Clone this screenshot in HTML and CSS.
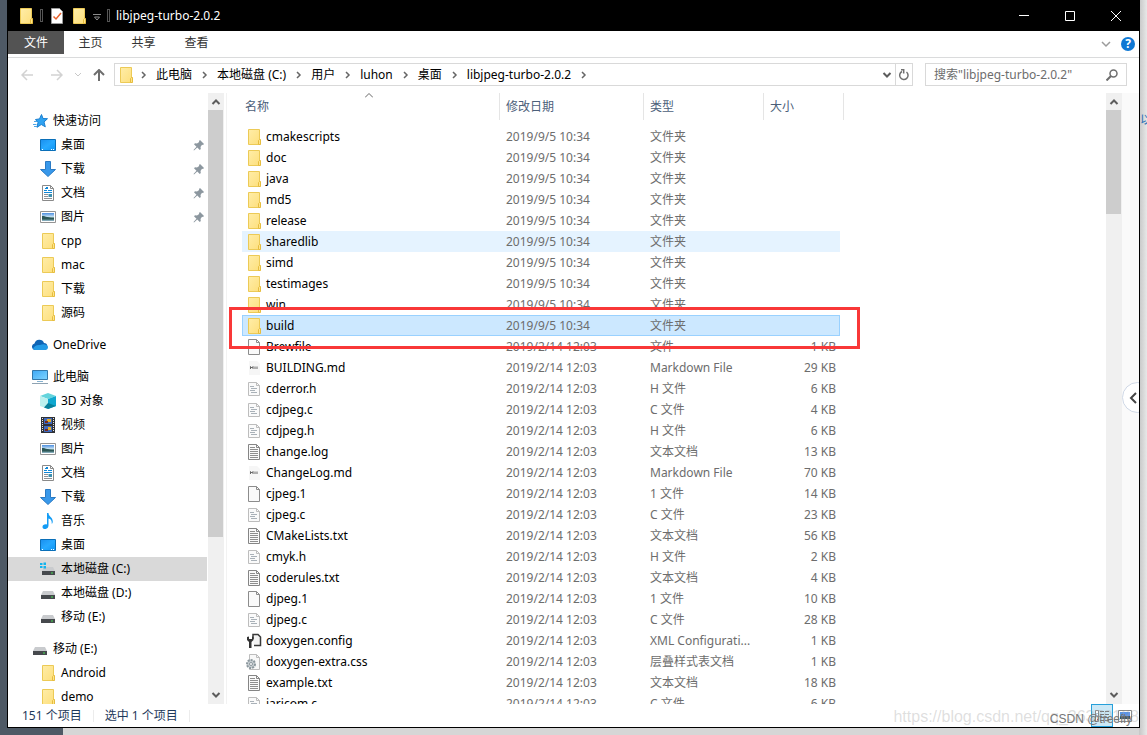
FILE: index.html
```html
<!DOCTYPE html>
<html lang="zh-CN">
<head>
    <meta charset="UTF-8">
    <meta name="viewport" content="width=device-width, initial-scale=1.0">
    <title>libjpeg-turbo-2.0.2</title>
    <link rel="stylesheet" href="styles.css">
</head>
<body>

<!-- Icon sprite -->
<svg class="sprite" aria-hidden="true">
    <linearGradient id="yellow" x2="1" y2="1"><stop stop-color="#ffeda8"/><stop offset="1" stop-color="#fddf7c"/></linearGradient>
    <linearGradient id="blue" x2="1" y2="1"><stop stop-color="#1a8fee"/><stop offset=".5" stop-color="#27a9ff"/><stop offset="1" stop-color="#0f96f5"/></linearGradient>
    <linearGradient id="screen" x2="1" y2="1"><stop stop-color="#3fa9f5"/><stop offset="1" stop-color="#7fd4ff"/></linearGradient>
    <linearGradient id="sky" x2="0" y2="1"><stop stop-color="#4b8ee0"/><stop offset=".5" stop-color="#cfe8f5"/><stop offset=".6" stop-color="#3c6a5e"/><stop offset="1" stop-color="#8fb5c9"/></linearGradient>
    <symbol id="folder" viewBox="0 0 16 16"><path d="M2.500.5h11v10h.5v5H2.500z" fill="url(#yellow)" stroke="#ecca56"/><path d="M12.500 15.500v-4l1-1h1v5z" fill="#ffe48a" stroke="#e6bd3f"/></symbol>
    <symbol id="star" viewBox="0 0 16 16"><path d="M9.500 1.500l1.500 4 4.500.2-3.500 3.300 1.300 4.800-4-2.300-4.300 2.800 1-4.800-2.500-3 4-.6z" fill="#2fa3f2" stroke="#1b7fd0"/><path d="M2 8.500h3M1 11.500h3.500M2 13.500h3" stroke="#4fa6e6"/></symbol>
    <symbol id="desktop" viewBox="0 0 16 16"><path d="M.5 2.500h15v11H.5z" fill="url(#blue)" stroke="#0a6fb8"/><path d="M2 12.500h1m8 0h1m1 0h1" stroke="#fff"/></symbol>
    <symbol id="download" viewBox="0 0 16 16"><path d="M5.500.5h5v8h5L8 15.500.5 8.500h5z" fill="#3898ea" stroke="#2a7ac4"/></symbol>
    <symbol id="document" viewBox="0 0 16 16"><path d="M2.500.5h8l3 3v12h-11z" fill="#fff" stroke="#8a8a8a"/><path d="M10.500.5v3h3" fill="none" stroke="#8a8a8a"/><path d="M6 2.500h2M5 3.500h3M4 5.500h3m1 0h4M4 7.500h8" stroke="#0d87d9"/><path d="M4 9.500h4m-4 2h4m-4 2h8" stroke="#8d9298"/><path d="M8.500 9h3.500v3H8.500z" fill="#3f8fae"/></symbol>
    <symbol id="picture" viewBox="0 0 16 16"><path d="M.5 2.500h15v11H.5z" fill="#fff" stroke="#949494"/><path d="M2 4h12v8H2z" fill="url(#sky)"/><path d="M2 7c4 0 6 2 12 2v1.500H2z" fill="#2c5757"/></symbol>
    <symbol id="cloud" viewBox="0 0 16 16"><path d="M3 13a3.300 3.300 0 0 1-.5-6.500 5 5 0 0 1 9.500-.5 3.600 3.600 0 0 1 1 7z" fill="#0f64b5"/><path d="M1 12c1-3 4-4.500 7-4 3-1.500 7-1 8 2 0 2-1 3-3 3H3z" fill="#249be6"/></symbol>
    <symbol id="computer" viewBox="0 0 16 16"><path d="M.5 1.500h15v9H.5z" fill="url(#screen)" stroke="#3478aa"/><path d="M5 12.500h6" stroke="#86b2cf"/><path d="M0 14.500h16" stroke="#8fa3b3"/></symbol>
    <symbol id="cube" viewBox="0 0 16 16"><path d="M8 0l8 3-8 3-8-3z" fill="#63d4dc"/><path d="M0 3l8 3v10l-8-3z" fill="#bcf0ee"/><path d="M16 3L8 6v10l8-3z" fill="#0fa7cf"/><path d="M8 10l8 3-8 3-4-1.500z" fill="#08809a"/></symbol>
    <symbol id="video" viewBox="0 0 16 16"><path d="M1 0h14v16H1z" fill="#303236"/><path d="M2.500 1v14m11-14v14" stroke="#e6e6e6" stroke-dasharray="1 1"/><path d="M4 1h8v6H4zm0 8h8v6H4z" fill="#3f69bd"/><path d="M7 2h4v3H7zm1 8h3v3H8z" fill="#e5ae28"/><path d="M5 4h3v2H5zm0 8h3v2H5z" fill="#742b1d"/></symbol>
    <symbol id="music" viewBox="0 0 16 16"><path d="M7 0h1.500c0 4 5.500 4.500 4 10-.4.800-.8 1-.8.500.3-3-1-4.500-3.200-5v7c-.3 4.500-6 4.500-6 1.500 0-2 2-3 4.500-2.500z" fill="#139cf5"/></symbol>
    <symbol id="disk" viewBox="0 0 16 16"><path d="M3 6h10l2 4H1z" fill="#c9cbce"/><path d="M1 10h14v4H1z" fill="#46494d"/><path d="M11 12h2" stroke="#45e052"/></symbol>
    <symbol id="sysdisk" viewBox="0 0 16 16"><path d="M4 6h9l2 4H2z" fill="#c9cbce"/><path d="M2 10h13v4H2z" fill="#46494d"/><path d="M11 12h2" stroke="#45e052"/><path d="M0 2h2.500v2H0zm3.500-.5H6V4H3.500zM0 5h2.500v2H0zm3.500 0H6v2.500H3.500z" fill="#12b4ee"/></symbol>
    <symbol id="pin" viewBox="0 0 12 12"><path d="M7 1l4 4-1 1-1-.2L7.500 8l.3 2-1 1-2.500-2.500L1 11.500 .5 11l3-3.300L1 5.200l1-1 2 .3L6.200 3 6 2z" fill="#8c979f"/></symbol>
    <symbol id="blank" viewBox="0 0 16 16"><path d="M2.500.5h8l3 3v12h-11z" fill="#fafafa" stroke="#8c8c8c"/><path d="M10.500.5v3h3" fill="none" stroke="#8c8c8c"/></symbol>
    <symbol id="text" viewBox="0 0 16 16"><path d="M2.500.5h8l3 3v12h-11z" fill="#fafafa" stroke="#858585"/><path d="M10.500.5v3h3" fill="none" stroke="#858585"/><path d="M4 3.500h5m-5 2h8m-8 2h8m-8 2h8m-8 2h8m-8 2h8" stroke="#8e8e8e"/></symbol>
    <symbol id="code" viewBox="0 0 16 16"><path d="M2.500 1.500h8l3 3v10h-11z" fill="#fafafa" stroke="#bdbdbd"/><path d="M10.500 1.500v3h3" fill="none" stroke="#bdbdbd"/><path d="M4 5.500h4m-3 2h6m-7 2h5m-4 2h6" stroke="#a9b1b8"/></symbol>
    <symbol id="markdown" viewBox="0 0 16 16"><path d="M3 1h8l3 3v11H3z" fill="#f6f6f6"/><path d="M4.500 9V6.500L6 8l1-1.500V9m2-2.500V9m2-2.500V9" fill="none" stroke="#666"/></symbol>
    <symbol id="config" viewBox="0 0 16 16"><path d="M7 6V1.500h5l2.500 2.500v8.500H8" fill="#f3f3f3" stroke="#3a3a3a" stroke-width="1.500"/><path d="M1 4v3l2 2v6h2.500V9l2-2V4L6 3.500V6H3V3.500z" fill="#333"/></symbol>
    <symbol id="css" viewBox="0 0 16 16"><path d="M3.500.5h7l3 3v12h-10z" fill="#f8f8f8" stroke="#bdbdbd"/><path d="M10.500.5v3h3" fill="none" stroke="#bdbdbd"/><circle cx="5" cy="10" r="4" fill="#c8cfd3" stroke="#8b979d" stroke-width="2" stroke-dasharray="2 1"/><circle cx="5" cy="10" r="1.500" fill="#fff" stroke="#8b979d"/></symbol>
    <symbol id="check" viewBox="0 0 16 16"><path d="M2.500.5h8l3 3v12h-11z" fill="#fff" stroke="#9a9a9a"/><path d="M4.500 8.500l2.500 2.500 5-6" fill="none" stroke="#e8622c" stroke-width="1.500"/></symbol>
    <symbol id="chevron-right" viewBox="0 0 8 8"><path d="M2.500 1l3 3-3 3" fill="none" stroke="currentColor" stroke-width="1.500"/></symbol>
    <symbol id="chevron-up" viewBox="0 0 10 10"><path d="M1.500 7L5 3.500 8.500 7" fill="none" stroke="currentColor" stroke-width="2"/></symbol>
    <symbol id="chevron-down" viewBox="0 0 10 10"><path d="M1.500 3L5 6.500 8.500 3" fill="none" stroke="currentColor" stroke-width="2"/></symbol>
</svg>

<div class="window">
    <header class="title-bar">
        <svg class="icon"><use href="#folder"/></svg>
        <span class="grip"></span>
        <button class="quick" aria-label="属性"><svg class="icon"><use href="#check"/></svg></button>
        <button class="quick" aria-label="新建文件夹"><svg class="icon"><use href="#folder"/></svg></button>
        <button class="quick" aria-label="自定义快速访问工具栏"><svg width="8" height="10" viewBox="0 0 8 10"><path d="M0 3.500h8M1.500 6h5L4 9z" fill="none" stroke="#8b8b8b"/></svg></button>
        <span class="grip"></span>
        <h1>libjpeg-turbo-2.0.2</h1>
        <div class="window-buttons">
            <button aria-label="最小化"><svg width="10" height="10"><path d="M0 4.500h10" stroke="#fff"/></svg></button>
            <button aria-label="最大化"><svg width="10" height="10"><path d="M.5.500h9v9h-9z" fill="none" stroke="#fff"/></svg></button>
            <button aria-label="关闭"><svg width="10" height="10"><path d="M0 0l10 10M10 0L0 10" stroke="#fff"/></svg></button>
        </div>
    </header>

    <div class="ribbon">
        <button class="tab file-tab">文件</button>
        <button class="tab">主页</button>
        <button class="tab">共享</button>
        <button class="tab">查看</button>
        <div class="ribbon-right">
            <button aria-label="展开功能区"><svg width="10" height="10" viewBox="0 0 10 10"><path d="M1 3l4 4 4-4" fill="none" stroke="#9b9b9b" stroke-width="1.500"/></svg></button>
            <button class="help" aria-label="帮助">?</button>
        </div>
    </div>

    <div class="address-row">
        <div class="arrows">
            <button aria-label="后退"><svg width="12" height="12"><path d="M12 6H1M6 1L1 6l5 5" fill="none" stroke="#d2d2d2" stroke-width="1.500"/></svg></button>
            <button aria-label="前进"><svg width="12" height="12"><path d="M0 6h11M6 1l5 5-5 5" fill="none" stroke="#d2d2d2" stroke-width="1.500"/></svg></button>
            <button aria-label="最近浏览的位置"><svg width="6" height="6"><path d="M0 1l3 3 3-3" fill="none" stroke="#c8c8c8"/></svg></button>
            <button aria-label="上移"><svg width="12" height="12"><path d="M6 12V2M1 6l5-5 5 5" fill="none" stroke="#6e6e6e" stroke-width="2"/></svg></button>
        </div>
        <nav class="address">
            <svg class="icon"><use href="#folder"/></svg>
            <svg class="sep"><use href="#chevron-right"/></svg>
            <a href="#">此电脑</a>
            <svg class="sep"><use href="#chevron-right"/></svg>
            <a href="#">本地磁盘 (C:)</a>
            <svg class="sep"><use href="#chevron-right"/></svg>
            <a href="#">用户</a>
            <svg class="sep"><use href="#chevron-right"/></svg>
            <a href="#">luhon</a>
            <svg class="sep"><use href="#chevron-right"/></svg>
            <a href="#">桌面</a>
            <svg class="sep"><use href="#chevron-right"/></svg>
            <a href="#">libjpeg-turbo-2.0.2</a>
            <svg class="sep"><use href="#chevron-right"/></svg>
            <button class="history" aria-label="以前的位置"><svg class="arrow"><use href="#chevron-down"/></svg></button>
            <button class="refresh" aria-label="刷新"><svg width="12" height="12" viewBox="0 0 12 12"><path d="M8.500 3A4.200 4.200 0 1 1 4 2.500M3 .8h2.700v3.700" fill="none" stroke="#707070" stroke-width="1.500"/></svg></button>
        </nav>
        <div class="search">
            <input type="text" aria-label="搜索" placeholder='搜索"libjpeg-turbo-2.0.2"'>
            <svg width="12" height="12" viewBox="0 0 12 12"><circle cx="7.500" cy="4.500" r="3.500" fill="none" stroke="#6e6e6e" stroke-width="1.500"/><path d="M5 7l-4.500 4.500" stroke="#6e6e6e" stroke-width="2"/></svg>
        </div>
    </div>

    <main class="content">
        <nav class="tree">
            <ul>
                <li><svg class="icon"><use href="#star"/></svg>快速访问</li>
                <li class="sub"><svg class="icon"><use href="#desktop"/></svg>桌面<svg class="pin"><use href="#pin"/></svg></li>
                <li class="sub"><svg class="icon"><use href="#download"/></svg>下载<svg class="pin"><use href="#pin"/></svg></li>
                <li class="sub"><svg class="icon"><use href="#document"/></svg>文档<svg class="pin"><use href="#pin"/></svg></li>
                <li class="sub"><svg class="icon"><use href="#picture"/></svg>图片<svg class="pin"><use href="#pin"/></svg></li>
                <li class="sub"><svg class="icon"><use href="#folder"/></svg>cpp</li>
                <li class="sub"><svg class="icon"><use href="#folder"/></svg>mac</li>
                <li class="sub"><svg class="icon"><use href="#folder"/></svg>下载</li>
                <li class="sub"><svg class="icon"><use href="#folder"/></svg>源码</li>
            </ul>
            <ul>
                <li><svg class="icon"><use href="#cloud"/></svg>OneDrive</li>
            </ul>
            <ul>
                <li><svg class="icon"><use href="#computer"/></svg>此电脑</li>
                <li class="sub"><svg class="icon"><use href="#cube"/></svg>3D 对象</li>
                <li class="sub"><svg class="icon"><use href="#video"/></svg>视频</li>
                <li class="sub"><svg class="icon"><use href="#picture"/></svg>图片</li>
                <li class="sub"><svg class="icon"><use href="#document"/></svg>文档</li>
                <li class="sub"><svg class="icon"><use href="#download"/></svg>下载</li>
                <li class="sub"><svg class="icon"><use href="#music"/></svg>音乐</li>
                <li class="sub"><svg class="icon"><use href="#desktop"/></svg>桌面</li>
                <li class="sub current"><svg class="icon"><use href="#sysdisk"/></svg>本地磁盘 (C:)</li>
                <li class="sub"><svg class="icon"><use href="#disk"/></svg>本地磁盘 (D:)</li>
                <li class="sub"><svg class="icon"><use href="#disk"/></svg>移动 (E:)</li>
            </ul>
            <ul>
                <li><svg class="icon"><use href="#disk"/></svg>移动 (E:)</li>
                <li class="sub"><svg class="icon"><use href="#folder"/></svg>Android</li>
                <li class="sub"><svg class="icon"><use href="#folder"/></svg>demo</li>
            </ul>
        </nav>
        <div class="scrollbar">
            <svg class="arrow"><use href="#chevron-up"/></svg>
            <div class="track"><div class="thumb tree-thumb"></div></div>
            <svg class="arrow"><use href="#chevron-down"/></svg>
        </div>

        <section class="files">
            <table>
                <thead>
                    <tr>
                        <th class="name">名称<svg class="sort" viewBox="0 0 8 5"><path d="M0 4.500l4-4 4 4" fill="none" stroke="#666"/></svg></th>
                        <th class="date">修改日期</th>
                        <th class="type">类型</th>
                        <th class="size">大小</th>
                    </tr>
                </thead>
                <tbody>
                    <tr><td><svg class="icon"><use href="#folder"/></svg>cmakescripts</td><td>2019/9/5 10:34</td><td>文件夹</td><td></td></tr>
                    <tr><td><svg class="icon"><use href="#folder"/></svg>doc</td><td>2019/9/5 10:34</td><td>文件夹</td><td></td></tr>
                    <tr><td><svg class="icon"><use href="#folder"/></svg>java</td><td>2019/9/5 10:34</td><td>文件夹</td><td></td></tr>
                    <tr><td><svg class="icon"><use href="#folder"/></svg>md5</td><td>2019/9/5 10:34</td><td>文件夹</td><td></td></tr>
                    <tr><td><svg class="icon"><use href="#folder"/></svg>release</td><td>2019/9/5 10:34</td><td>文件夹</td><td></td></tr>
                    <tr class="hovered"><td><svg class="icon"><use href="#folder"/></svg>sharedlib</td><td>2019/9/5 10:34</td><td>文件夹</td><td></td></tr>
                    <tr><td><svg class="icon"><use href="#folder"/></svg>simd</td><td>2019/9/5 10:34</td><td>文件夹</td><td></td></tr>
                    <tr><td><svg class="icon"><use href="#folder"/></svg>testimages</td><td>2019/9/5 10:34</td><td>文件夹</td><td></td></tr>
                    <tr><td><svg class="icon"><use href="#folder"/></svg>win</td><td>2019/9/5 10:34</td><td>文件夹</td><td></td></tr>
                    <tr class="selected"><td><svg class="icon"><use href="#folder"/></svg>build<span class="marker"></span></td><td>2019/9/5 10:34</td><td>文件夹</td><td></td></tr>
                    <tr><td><svg class="icon"><use href="#blank"/></svg>Brewfile</td><td>2019/2/14 12:03</td><td>文件</td><td>1 KB</td></tr>
                    <tr><td><svg class="icon"><use href="#markdown"/></svg>BUILDING.md</td><td>2019/2/14 12:03</td><td>Markdown File</td><td>29 KB</td></tr>
                    <tr><td><svg class="icon"><use href="#code"/></svg>cderror.h</td><td>2019/2/14 12:03</td><td>H 文件</td><td>6 KB</td></tr>
                    <tr><td><svg class="icon"><use href="#code"/></svg>cdjpeg.c</td><td>2019/2/14 12:03</td><td>C 文件</td><td>4 KB</td></tr>
                    <tr><td><svg class="icon"><use href="#code"/></svg>cdjpeg.h</td><td>2019/2/14 12:03</td><td>H 文件</td><td>6 KB</td></tr>
                    <tr><td><svg class="icon"><use href="#text"/></svg>change.log</td><td>2019/2/14 12:03</td><td>文本文档</td><td>13 KB</td></tr>
                    <tr><td><svg class="icon"><use href="#markdown"/></svg>ChangeLog.md</td><td>2019/2/14 12:03</td><td>Markdown File</td><td>70 KB</td></tr>
                    <tr><td><svg class="icon"><use href="#blank"/></svg>cjpeg.1</td><td>2019/2/14 12:03</td><td>1 文件</td><td>14 KB</td></tr>
                    <tr><td><svg class="icon"><use href="#code"/></svg>cjpeg.c</td><td>2019/2/14 12:03</td><td>C 文件</td><td>23 KB</td></tr>
                    <tr><td><svg class="icon"><use href="#text"/></svg>CMakeLists.txt</td><td>2019/2/14 12:03</td><td>文本文档</td><td>56 KB</td></tr>
                    <tr><td><svg class="icon"><use href="#code"/></svg>cmyk.h</td><td>2019/2/14 12:03</td><td>H 文件</td><td>2 KB</td></tr>
                    <tr><td><svg class="icon"><use href="#text"/></svg>coderules.txt</td><td>2019/2/14 12:03</td><td>文本文档</td><td>4 KB</td></tr>
                    <tr><td><svg class="icon"><use href="#blank"/></svg>djpeg.1</td><td>2019/2/14 12:03</td><td>1 文件</td><td>10 KB</td></tr>
                    <tr><td><svg class="icon"><use href="#code"/></svg>djpeg.c</td><td>2019/2/14 12:03</td><td>C 文件</td><td>28 KB</td></tr>
                    <tr><td><svg class="icon"><use href="#config"/></svg>doxygen.config</td><td>2019/2/14 12:03</td><td>XML Configurati...</td><td>1 KB</td></tr>
                    <tr><td><svg class="icon"><use href="#css"/></svg>doxygen-extra.css</td><td>2019/2/14 12:03</td><td>层叠样式表文档</td><td>1 KB</td></tr>
                    <tr><td><svg class="icon"><use href="#text"/></svg>example.txt</td><td>2019/2/14 12:03</td><td>文本文档</td><td>18 KB</td></tr>
                    <tr><td><svg class="icon"><use href="#code"/></svg>jaricom.c</td><td>2019/2/14 12:03</td><td>C 文件</td><td>6 KB</td></tr>
                </tbody>
            </table>
        </section>
        <div class="scrollbar">
            <svg class="arrow"><use href="#chevron-up"/></svg>
            <div class="track"><div class="thumb files-thumb"></div></div>
            <svg class="arrow"><use href="#chevron-down"/></svg>
        </div>
        <div class="side-edge">
            <button class="side-handle" aria-label="展开侧栏"><svg width="8" height="12"><path d="M7 1L2 6l5 5" fill="none" stroke="#444" stroke-width="2"/></svg></button>
        </div>
    </main>

    <footer class="status-bar">
        <span class="status">151 个项目</span>
        <span class="status">选中 1 个项目</span>
        <div class="views">
            <button class="view active" aria-label="详细信息"><svg width="16" height="14"><path d="M1.500 1.500h3v11h-3z" fill="#fff" stroke="#8b8b8b"/><path d="M2.500 4.500h1m-1 3h1" stroke="#58a"/><path d="M3 10.500h1" stroke="#c33"/><path d="M6 2.500h4m1 0h4m-9 3h4m1 0h4m-9 3h4m1 0h4m-9 3h4m1 0h4" stroke="#777"/></svg></button>
            <button class="view" aria-label="大图标"><svg width="14" height="12"><path d="M.5.500h13v11H.5z" fill="#fff" stroke="#858585"/><path d="M2 2h10v5H2z" fill="#5a94e8"/><path d="M2 6h10v3H2z" fill="#334f60"/></svg></button>
        </div>
    </footer>
</div>

<div class="behind">以</div>
<div class="watermark blog">https://blog.csdn.net/qq_36370188</div>
<div class="watermark author">CSDN @treefly</div>

</body>
</html>
```
FILE: styles.css
```css
* {
    box-sizing: border-box;
}

body {
    margin: 0;
    padding: 0 7px 7px;
    height: 100vh;
    overflow: hidden;
    position: relative;
    font-family: "Noto Sans", "Noto Sans CJK SC", sans-serif;
    font-size: 12px;
    line-height: 20px;
    color: #000;
    background: linear-gradient(to right, #4e5965 63px, #d6d6d6 63px, #d6d6d6 calc(100% - 8px), #c6c6c6 calc(100% - 8px), #e8e8e8 100%);
}

button {
    display: flex;
    align-items: center;
    justify-content: center;
    padding: 0;
    border: none;
    background: none;
    font: inherit;
    color: inherit;
}

svg {
    display: block;
    flex: none;
}

a {
    color: inherit;
    text-decoration: none;
}

.sprite {
    position: absolute;
    width: 0;
    height: 0;
}

.icon {
    width: 16px;
    height: 16px;
}

.arrow {
    width: 10px;
    height: 10px;
    color: #5c5c5c;
}

.window {
    display: flex;
    flex-direction: column;
    height: 100%;
    border: 1px solid #000;
    border-top: none;
    background: #fff;
}

/* Title bar */
.title-bar {
    display: flex;
    align-items: center;
    gap: 6px;
    height: 31px;
    padding-left: 10px;
    background: #000;
    color: #fff;
}

.title-bar h1 {
    margin: 0;
    font-size: 12px;
    font-weight: normal;
}

.grip {
    width: 3px;
    height: 13px;
    border: 1px solid #555;
}

.window-buttons {
    display: flex;
    margin-left: auto;
}

.window-buttons button {
    width: 46px;
    height: 31px;
}

/* Ribbon */
.ribbon {
    display: flex;
    height: 27px;
    border-bottom: 1px solid #dadbdc;
    color: #333;
}

.tab {
    width: 53px;
    height: 24px;
}

.file-tab {
    width: 56px;
    height: 23px;
    background: #535353;
    color: #fff;
}

.ribbon-right {
    display: flex;
    align-items: center;
    gap: 10px;
    margin-left: auto;
    padding-right: 4px;
}

.help {
    width: 14px;
    height: 14px;
    border-radius: 50%;
    background: #0f78d4;
    color: #fff;
    font-weight: bold;
}

/* Address row */
.address-row {
    display: flex;
    align-items: center;
    height: 35px;
    padding: 0 12px 2px 13px;
}

.arrows {
    display: flex;
    align-items: center;
    gap: 18px;
    width: 93px;
}

.arrows button:nth-child(3) {
    margin: 0 -6px;
}

.address {
    display: flex;
    flex: 1;
    align-items: center;
    height: 23px;
    padding-left: 3px;
    line-height: 18px;
    border: 1px solid #d9d9d9;
}

.address .icon {
    margin-right: -3px;
}

.sep {
    width: 9px;
    height: 8px;
    margin: 0 8px;
    color: #666;
}

.history {
    margin-left: auto;
    width: 17px;
}

.refresh {
    width: 17px;
    height: 21px;
    border-left: 1px solid #d9d9d9;
}

.search {
    display: flex;
    align-items: center;
    width: 202px;
    height: 23px;
    margin-left: 12px;
    padding: 0 8px;
    border: 1px solid #d9d9d9;
}

.search input {
    flex: 1;
    min-width: 0;
    padding: 0;
    border: none;
    outline: none;
    font: inherit;
}

.search input::placeholder {
    color: #6d6d6d;
}

/* Content */
.content {
    display: flex;
    flex: 1;
    min-height: 0;
}

.tree {
    width: 200px;
    padding-top: 16px;
    overflow: hidden;
}

.tree ul {
    margin: 0 0 8px;
    padding: 0;
    list-style: none;
}

.tree li {
    display: flex;
    align-items: center;
    gap: 5px;
    height: 24px;
    margin-right: 1px;
    padding-left: 24px;
}

.tree .sub {
    padding-left: 32px;
}

.tree .current {
    background: #d9d9d9;
}

.pin {
    width: 12px;
    height: 12px;
    margin-left: auto;
    margin-right: 2px;
}

.scrollbar {
    display: flex;
    flex-direction: column;
    align-items: center;
    width: 16px;
    padding: 4px 0;
    background: #f0f0f0;
}

.track {
    flex: 1;
    width: 100%;
    margin: 3px 0;
}

.thumb {
    width: 15px;
    background: #cdcdcd;
}

.tree-thumb {
    height: 74%;
}

.files-thumb {
    height: 18%;
}

.files {
    flex: 1;
    margin-left: 2px;
    padding-left: 15px;
    overflow: hidden;
    border-left: 1px solid #f2f2f2;
}

table {
    width: 598px;
    table-layout: fixed;
    border-collapse: collapse;
}

th {
    position: relative;
    height: 33px;
    padding: 0 6px;
    vertical-align: top;
    line-height: 27px;
    font-weight: normal;
    text-align: left;
    color: #4c607a;
    background: linear-gradient(#e5e5e5, #e5e5e5) right top / 1px 27px no-repeat;
}

.name {
    width: 258px;
    padding-left: 3px;
}

.date {
    width: 144px;
}

.type {
    width: 120px;
}

.size {
    background: none;
}

.size::after {
    content: "";
    position: absolute;
    top: 0;
    right: -4px;
    height: 27px;
    border-right: 1px solid #e5e5e5;
}

.sort {
    position: absolute;
    top: 0;
    left: calc(50% - 6px);
    width: 8px;
    height: 5px;
}

td {
    height: 21px;
    padding: 0 6px;
    line-height: 21px;
    white-space: nowrap;
    color: #6d6d6d;
}

td:first-child {
    display: flex;
    align-items: center;
    gap: 4px;
    padding-left: 4px;
    color: #000;
}

td:last-child {
    padding-right: 4px;
    text-align: right;
}

.hovered td {
    background: #e5f3ff;
}

.selected {
    position: relative;
}

.selected td {
    background: #cce8ff;
    box-shadow: inset 0 1px #99d1ff, inset 0 -1px #99d1ff;
}

.selected td:first-child {
    box-shadow: inset 0 1px #99d1ff, inset 0 -1px #99d1ff, inset 1px 0 #99d1ff;
}

.selected td:last-child {
    box-shadow: inset 0 1px #99d1ff, inset 0 -1px #99d1ff, inset -1px 0 #99d1ff;
}

/* Red frame around the build folder */
.marker {
    position: absolute;
    inset: -8px -20px -13px -13px;
    border: 3px solid #f93838;
}

.side-edge {
    position: relative;
    width: 17px;
    overflow: hidden;
    background: #fafafa;
}

.side-handle {
    position: absolute;
    top: 289px;
    left: 0;
    width: 31px;
    height: 31px;
    padding-right: 10px;
    border: 1px solid #cfd8e6;
    border-radius: 50%;
    background: #fff;
}

/* Status bar */
.status-bar {
    display: flex;
    align-items: center;
    height: 23px;
    padding-left: 3px;
    color: #1e395b;
}

.status {
    padding: 0 11px;
    line-height: 12px;
    border-right: 1px solid #ececec;
}

.views {
    display: flex;
    align-items: center;
    gap: 3px;
    margin-left: auto;
    padding-right: 5px;
}

.view {
    width: 18px;
    height: 23px;
}

.view.active {
    width: 22px;
    background: #cbe8f6;
    border: 1px solid #26a0da;
}

/* Things over and behind the window */
.behind {
    position: absolute;
    top: 110px;
    right: 0;
    width: 7px;
    overflow: hidden;
    color: #2c6fb5;
}

.watermark {
    position: absolute;
    font-family: "Liberation Sans", Arial, sans-serif;
    white-space: nowrap;
}

.blog {
    right: 8px;
    bottom: 8px;
    font-size: 16px;
    color: rgba(160, 160, 160, 0.35);
}

.author {
    right: 15px;
    bottom: 6px;
    font-size: 12px;
    color: #777;
}
```
